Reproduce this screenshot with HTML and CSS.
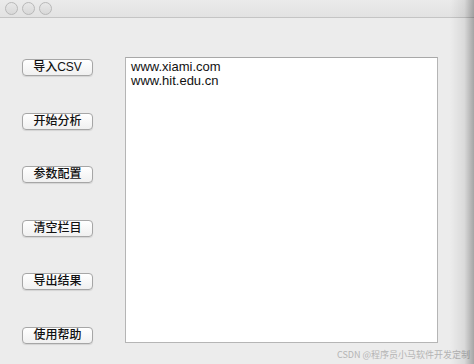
FILE: index.html
```html
<!DOCTYPE html>
<html lang="zh">
<head>
<meta charset="utf-8">
<title>URL分析</title>
<link rel="stylesheet" href="styles.css">
</head>
<body>
<div class="window">
  <div class="titlebar">
    <span class="light"></span>
    <span class="light"></span>
    <span class="light"></span>
  </div>
  <div class="content">
    <div class="buttons">
      <button class="btn">导入CSV</button>
      <button class="btn">开始分析</button>
      <button class="btn">参数配置</button>
      <button class="btn">清空栏目</button>
      <button class="btn">导出结果</button>
      <button class="btn">使用帮助</button>
    </div>
    <div class="textarea">
      <div class="line">www.xiami.com</div>
      <div class="line">www.hit.edu.cn</div>
    </div>
  </div>
  <div class="watermark">CSDN @程序员小马软件开发定制</div>
  <div class="edge-shadow"></div>
</div>
</body>
</html>
```

FILE: styles.css
```css
html, body {
  margin: 0;
  padding: 0;
  width: 474px;
  height: 364px;
  overflow: hidden;
  background: #ececec;
}

.window {
  position: relative;
  width: 474px;
  height: 364px;
  background: #ececec;
  font-family: "Liberation Sans", "Noto Sans CJK SC", sans-serif;
}

.titlebar {
  height: 17px;
  border-bottom: 1px solid #c4c4c4;
  background: linear-gradient(#ebebeb, #e2e2e2);
  display: flex;
  align-items: center;
  gap: 4px;
  padding-left: 5px;
}

.light {
  width: 11px;
  height: 11px;
  border-radius: 50%;
  border: 1px solid #b8b8b8;
  background: linear-gradient(#e8e8e8, #d8d8d8);
}

.content {
  display: flex;
  padding-left: 22px;
}

.buttons {
  display: flex;
  flex-direction: column;
  gap: 36.6px;
  padding-top: 41px;
  width: 71px;
}

.btn {
  height: 17px;
  width: 71px;
  padding: 0;
  margin: 0;
  box-sizing: border-box;
  border: 1px solid #a6a6a6;
  border-radius: 4px;
  background: linear-gradient(#ffffff, #f0f0f0);
  box-shadow: 0 1px 1px rgba(0,0,0,0.1);
  font-family: "Liberation Sans", "Noto Sans CJK SC", sans-serif;
  font-size: 12px;
  font-weight: 500;
  line-height: 15px;
  color: #111;
  text-align: center;
}

.textarea {
  margin-left: 32px;
  margin-top: 39px;
  width: 313px;
  height: 286px;
  box-sizing: border-box;
  background: #fff;
  border: 1px solid #b5b5b5;
  border-top-color: #a8a8a8;
  padding: 2px 5px;
  font-size: 13px;
  line-height: 14px;
  color: #111;
}

.watermark {
  position: absolute;
  right: 4px;
  bottom: 4px;
  font-family: "Noto Sans CJK SC", sans-serif;
  font-size: 9px;
  line-height: 10px;
  color: #b4b4b4;
}

.edge-shadow {
  position: absolute;
  top: 0;
  right: 0;
  width: 24px;
  height: 364px;
  background: linear-gradient(to right, rgba(0,0,0,0), rgba(0,0,0,0.08) 60%, rgba(0,0,0,0.3));
  pointer-events: none;
}
```
